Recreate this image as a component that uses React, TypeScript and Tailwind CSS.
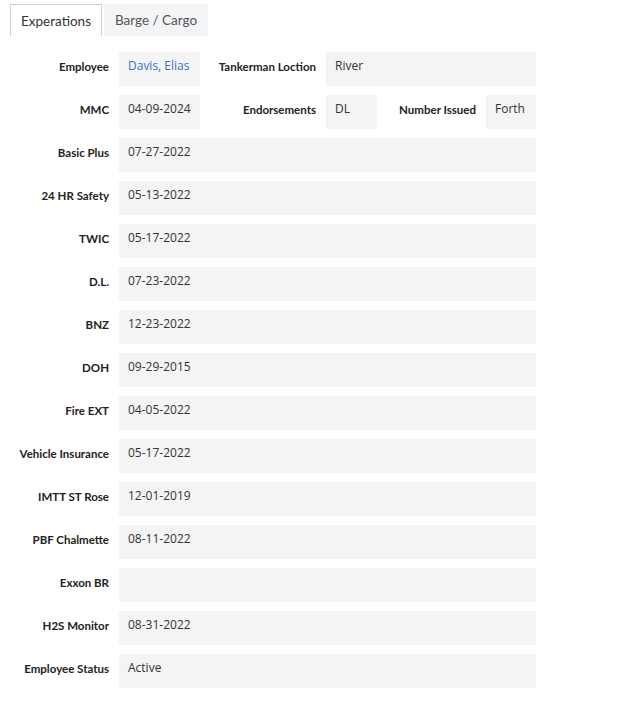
const label = "font-['Lato','Liberation_Sans',sans-serif] font-bold text-[11.5px] leading-[16px] text-[#222] text-right pt-[7px]";
const box = "bg-[#f4f4f4] h-[34px] pl-[9px] pt-[6px] text-[12px] leading-[16px] text-[#333] font-['Open_Sans','Noto_Sans',sans-serif]";

const dates: [string, string][] = [
  ['Basic Plus', '07-27-2022'],
  ['24 HR Safety', '05-13-2022'],
  ['TWIC', '05-17-2022'],
  ['D.L.', '07-23-2022'],
  ['BNZ', '12-23-2022'],
  ['DOH', '09-29-2015'],
  ['Fire EXT', '04-05-2022'],
  ['Vehicle Insurance', '05-17-2022'],
  ['IMTT ST Rose', '12-01-2019'],
  ['PBF Chalmette', '08-11-2022'],
  ['Exxon BR', ''],
  ['H2S Monitor', '08-31-2022'],
  ['Employee Status', 'Active'],
];

export default function App() {
  return (
    <div className="w-[620px] h-[724px] bg-white pt-[4px]">
      {/* tabs */}
      <div className="flex pl-[10px] gap-[2px] font-['Lato','Open_Sans',sans-serif] text-[13.5px] leading-[16px]">
        <div className="w-[92px] h-[32px] flex items-center justify-center border border-b-0 border-[#d0d0d0] bg-white text-[#333]">
          Experations
        </div>
        <div className="w-[104px] h-[32px] flex items-center justify-center bg-[#f3f4f5] text-[#555]">
          Barge / Cargo
        </div>
      </div>

      <div className="mt-[16px] flex flex-col gap-[9px]">
        <div className="flex">
          <div className={`w-[109px] ${label}`}>Employee</div>
          <div className={`ml-[10px] w-[81px] ${box} !text-[#3a6fc9]`}>Davis, Elias</div>
          <div className={`w-[116px] ${label}`}>Tankerman Loction</div>
          <div className={`ml-[10px] w-[210px] ${box}`}>River</div>
        </div>
        <div className="flex">
          <div className={`w-[109px] ${label}`}>MMC</div>
          <div className={`ml-[10px] w-[81px] ${box}`}>04-09-2024</div>
          <div className={`w-[116px] ${label}`}>Endorsements</div>
          <div className={`ml-[10px] w-[51px] ${box}`}>DL</div>
          <div className={`w-[99px] ${label}`}>Number Issued</div>
          <div className={`ml-[10px] w-[50px] ${box}`}>Forth</div>
        </div>
        {dates.map(([name, value]) => (
          <div key={name} className="flex">
            <div className={`w-[109px] ${label}`}>{name}</div>
            <div className={`ml-[10px] w-[417px] ${box}`}>{value}</div>
          </div>
        ))}
      </div>
    </div>
  );
}
